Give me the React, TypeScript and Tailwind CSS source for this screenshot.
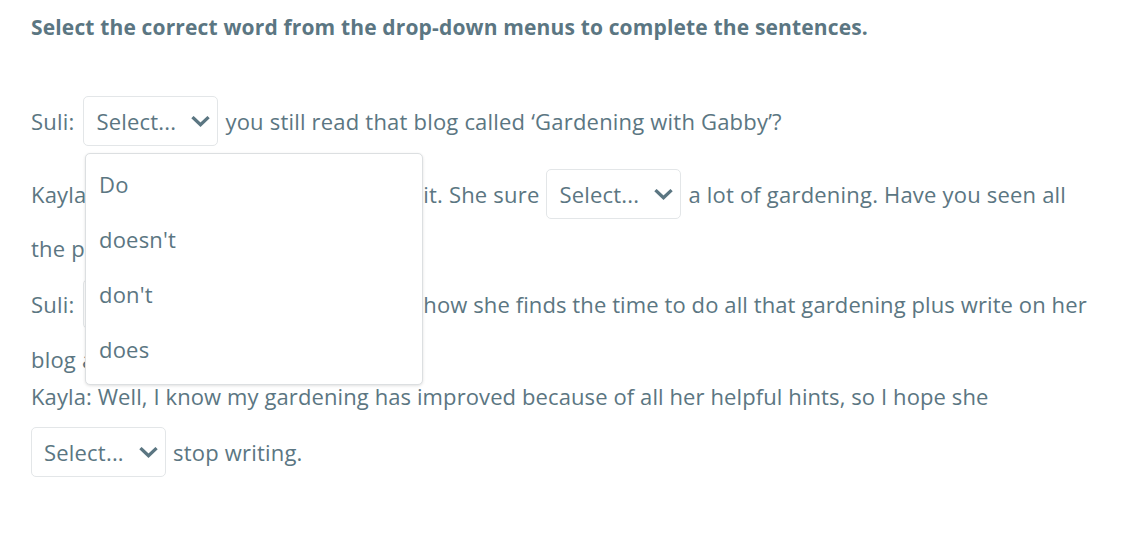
import { ReactNode } from 'react'

const FONT = { fontFamily: '"Open Sans", "Noto Sans", sans-serif' }

function Chevron() {
  return (
    <svg viewBox="0 0 20 12" className="w-[19px] h-[11px]" fill="none">
      <path d="M2.5 2.5 L10 9.5 L17.5 2.5" stroke="#5b7682" strokeWidth="3.6" strokeLinecap="square" />
    </svg>
  )
}

function SelectBox({ className = 'mx-[7px]' }: { className?: string }) {
  return (
    <span
      className={`inline-flex items-center justify-between h-[50px] w-[135px] pl-[12px] pr-[7px] border border-[#e3e6e8] rounded-[5px] bg-white ${className}`}
    >
      <span>Select...</span>
      <Chevron />
    </span>
  )
}

function Row({ h, mt, children }: { h: number; mt: string; children: ReactNode }) {
  return (
    <div className={`flex items-center whitespace-pre ${mt}`} style={{ height: h }}>
      {children}
    </div>
  )
}

const options = ['Do', "doesn't", "don't", 'does']

export default function App() {
  return (
    <div
      className="relative w-[1134px] h-[542px] bg-white text-[#5b7682] text-[22px] tracking-[0.2px] pl-[31px]"
      style={FONT}
    >
      <h1 className="pt-[12px] h-[44px] text-[21px] font-bold tracking-[0.15px] leading-[30px]">
        Select the correct word from the drop-down menus to complete the sentences.
      </h1>

      <div className="flex flex-col">
        <Row h={50} mt="mt-[52px]">
          <span>Suli:</span>
          <SelectBox className="ml-[9px] mr-[7px]" />
          <span>you still read that blog called ‘Gardening with Gabby’?</span>
        </Row>
        <Row h={50} mt="mt-[23px]">
          <span>Kayla:</span>
          <SelectBox />
          <span>read it and enjoy it. She sure</span>
          <SelectBox />
          <span>a lot of gardening. Have you seen all</span>
        </Row>
        <Row h={37} mt="mt-[11px]">
          <span>the pictures she posts?</span>
        </Row>
        <Row h={50} mt="mt-[12px]">
          <span>Suli:</span>
          <SelectBox className="ml-[9px] mr-[13px]" />
          <span className="tracking-[0.1px]">
            I really do wonder how she finds the time to do all that gardening plus write on her
          </span>
        </Row>
        <Row h={37} mt="mt-[12px]">
          <span>blog as well.</span>
        </Row>
        <Row h={37} mt="mt-0">
          <span className="tracking-[0.1px]">
            Kayla: Well, I know my gardening has improved because of all her helpful hints, so I hope she
          </span>
        </Row>
        <Row h={50} mt="mt-[12px]">
          <SelectBox className="mr-[7px]" />
          <span>stop writing.</span>
        </Row>
      </div>

      {/* open dropdown menu */}
      <div className="absolute left-[85px] top-[153px] w-[338px] pt-[3px] pb-[7px] bg-white border border-[#dcdfe1] rounded-[5px] shadow-[0_1px_3px_rgba(0,0,0,0.12)]">
        {options.map((o) => (
          <div key={o} className="h-[55px] flex items-center pl-[13px]">
            {o}
          </div>
        ))}
      </div>
    </div>
  )
}
